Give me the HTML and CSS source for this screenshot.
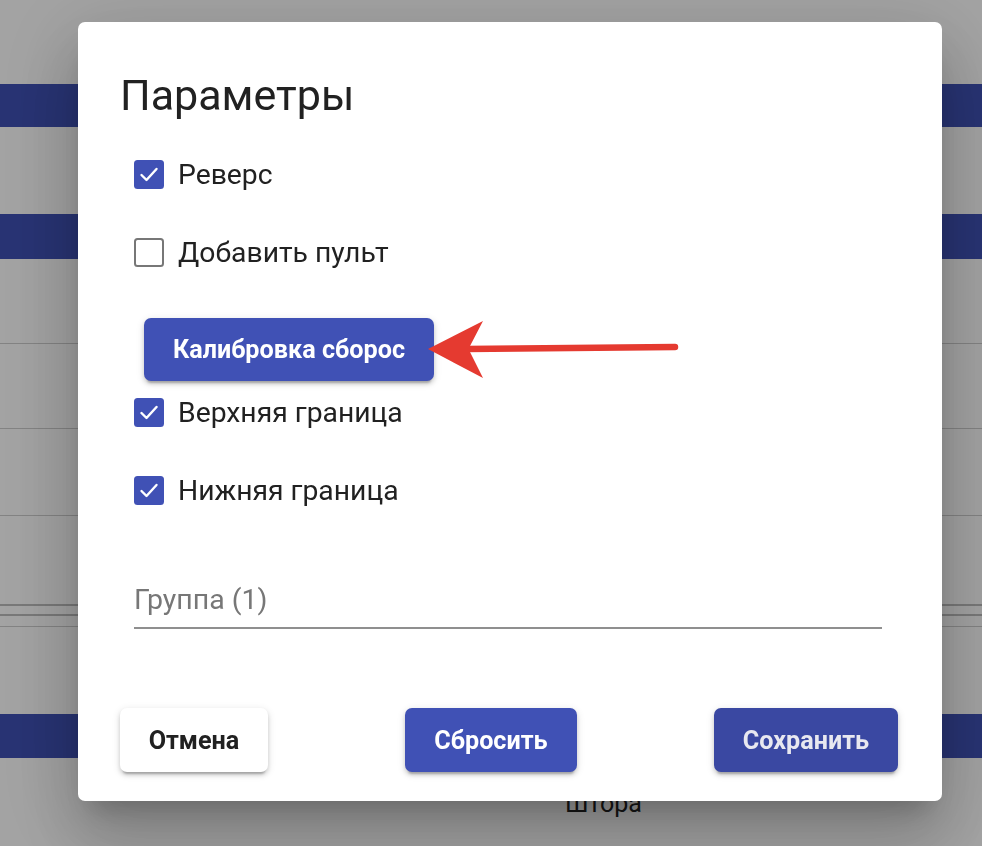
FILE: index.html
```html
<!DOCTYPE html>
<html lang="ru">
<head>
<meta charset="utf-8">
<title>Параметры</title>
<link rel="stylesheet" href="styles.css">
</head>
<body>
<div class="page">
  <div class="spacer s84"></div>
  <div class="bar b43"></div>
  <div class="spacer s87"></div>
  <div class="bar b45"></div>
  <div class="row rw85"></div>
  <div class="row rw85"></div>
  <div class="row rw86"></div>
  <div class="row dark rw89"></div>
  <div class="row dark rw8"></div>
  <div class="row rw9"></div>
  <div class="spacer s87"></div>
  <div class="bar b44"></div>
  <div class="bottom"><span class="blind">Штора</span></div>
</div>

<div class="backdrop">
  <div class="dialog">
    <h2 class="title">Параметры</h2>
    <div class="content">
      <label class="check-row r-reverse">
        <span class="box checked"><svg viewBox="0 0 30 29" width="30" height="29"><rect x="0" y="0" width="30" height="29" rx="3.5" fill="#4051b5"/><polyline points="7.5,15 12.5,20 22.5,9" fill="none" stroke="#fff" stroke-width="2.4" stroke-linecap="round" stroke-linejoin="round"/></svg></span>
        <span class="label">Реверс</span>
      </label>
      <label class="check-row r-remote">
        <span class="box empty"></span>
        <span class="label">Добавить пульт</span>
      </label>
      <button class="btn primary calib">Калибровка сборос</button>
      <label class="check-row r-upper">
        <span class="box checked"><svg viewBox="0 0 30 29" width="30" height="29"><rect x="0" y="0" width="30" height="29" rx="3.5" fill="#4051b5"/><polyline points="7.5,15 12.5,20 22.5,9" fill="none" stroke="#fff" stroke-width="2.4" stroke-linecap="round" stroke-linejoin="round"/></svg></span>
        <span class="label">Верхняя граница</span>
      </label>
      <label class="check-row r-lower">
        <span class="box checked"><svg viewBox="0 0 30 29" width="30" height="29"><rect x="0" y="0" width="30" height="29" rx="3.5" fill="#4051b5"/><polyline points="7.5,15 12.5,20 22.5,9" fill="none" stroke="#fff" stroke-width="2.4" stroke-linecap="round" stroke-linejoin="round"/></svg></span>
        <span class="label">Нижняя граница</span>
      </label>
      <div class="field"><span class="field-label">Группа (1)</span></div>
    </div>
    <div class="actions">
      <button class="btn light cancel">Отмена</button>
      <button class="btn primary reset">Сбросить</button>
      <button class="btn primary save">Сохранить</button>
    </div>
    <svg class="arrow" viewBox="0 0 864 779" width="864" height="779">
      <line x1="388" y1="327" x2="597" y2="325" stroke="#e53a30" stroke-width="6.5" stroke-linecap="round"/>
      <polygon points="350,327 405,299 392,324 392,330 405,356" fill="#e53a30"/>
    </svg>
  </div>
</div>
</body>
</html>
```

FILE: styles.css
```css
* { box-sizing: border-box; }
html, body { margin: 0; padding: 0; }
body {
  width: 982px;
  height: 846px;
  overflow: hidden;
  font-family: Roboto, "Liberation Sans", sans-serif;
  background: #fff;
}
.page { width: 982px; }
.spacer.s84 { height: 84px; }
.spacer.s87 { height: 87px; }
.bar { background: #3f51b5; }
.bar.b43 { height: 43px; }
.bar.b45 { height: 45px; }
.bar.b44 { height: 44px; }
.row { border-bottom: 1px solid #cdcdcd; }
.row.dark { border-bottom: 2px solid #bdbdbd; }
.rw85 { height: 85px; }
.rw86 { height: 87px; }
.rw89 { height: 90px; }
.rw8 { height: 10px; }
.rw9 { height: 11px; }
.bottom {
  height: 86px;
  padding-left: 565px;
  padding-top: 30px;
  font-size: 25px;
  line-height: 32px;
  color: #222;
}

.backdrop {
  position: fixed;
  inset: 0;
  background: rgba(0, 0, 0, 0.36);
  padding: 22px 0 0 78px;
}
.dialog {
  position: relative;
  width: 864px;
  height: 779px;
  background: #fff;
  border-radius: 7px;
  display: flex;
  flex-direction: column;
  box-shadow: 0 19px 26px -12px rgba(0,0,0,0.2), 0 42px 66px 5px rgba(0,0,0,0.14), 0 16px 80px 14px rgba(0,0,0,0.12);
}
.title {
  margin: 48px 0 0 42px;
  font-size: 43px;
  line-height: 50px;
  font-weight: 400;
  color: #212121;
}
.content {
  padding: 0 60px 0 56px;
  display: flex;
  flex-direction: column;
  align-items: flex-start;
}
.check-row {
  display: flex;
  align-items: center;
  gap: 14px;
  height: 62px;
  font-size: 28.3px;
  color: #212121;
}
.box { width: 30px; height: 29px; display: block; flex: none; }
.box svg { display: block; }
.box.empty {
  border: 2.5px solid #777;
  border-radius: 3.5px;
  background: #fff;
}
.r-reverse { margin-top: 23px; }
.r-remote { margin-top: 16px; }
.r-upper { margin-top: 0; }
.r-lower { margin-top: 16px; }

.btn {
  border: none;
  border-radius: 7px;
  height: 63px;
  font-family: Roboto, "Liberation Sans", sans-serif;
  font-size: 25.2px;
  font-weight: 700;
  padding: 0;
  box-shadow: 0 5px 2px -3px rgba(0,0,0,0.2), 0 3px 4px 0 rgba(0,0,0,0.14), 0 2px 9px 0 rgba(0,0,0,0.12);
}
.btn.primary { background: #4051b5; color: #fff; }
.btn.light { background: #fff; color: #212121; }
.calib { margin: 35px 0 0 10px; width: 290px; }

.field {
  margin-top: 59px;
  width: 748px;
  padding-bottom: 7px;
  border-bottom: 2px solid #8f8f8f;
}
.field-label {
  display: block;
  font-size: 28.5px;
  line-height: 40px;
  color: #777;
}

.actions {
  margin-top: auto;
  padding: 0 44px 29px 42px;
  display: flex;
  justify-content: space-between;
  align-items: center;
}
.actions .btn { height: 64px; }
.cancel { width: 148px; }
.reset { width: 172px; }
.save { width: 184px; background: #3a48a2 !important; color: #e8e8f0 !important; }

.arrow {
  position: absolute;
  left: 0;
  top: 0;
  pointer-events: none;
}
```
